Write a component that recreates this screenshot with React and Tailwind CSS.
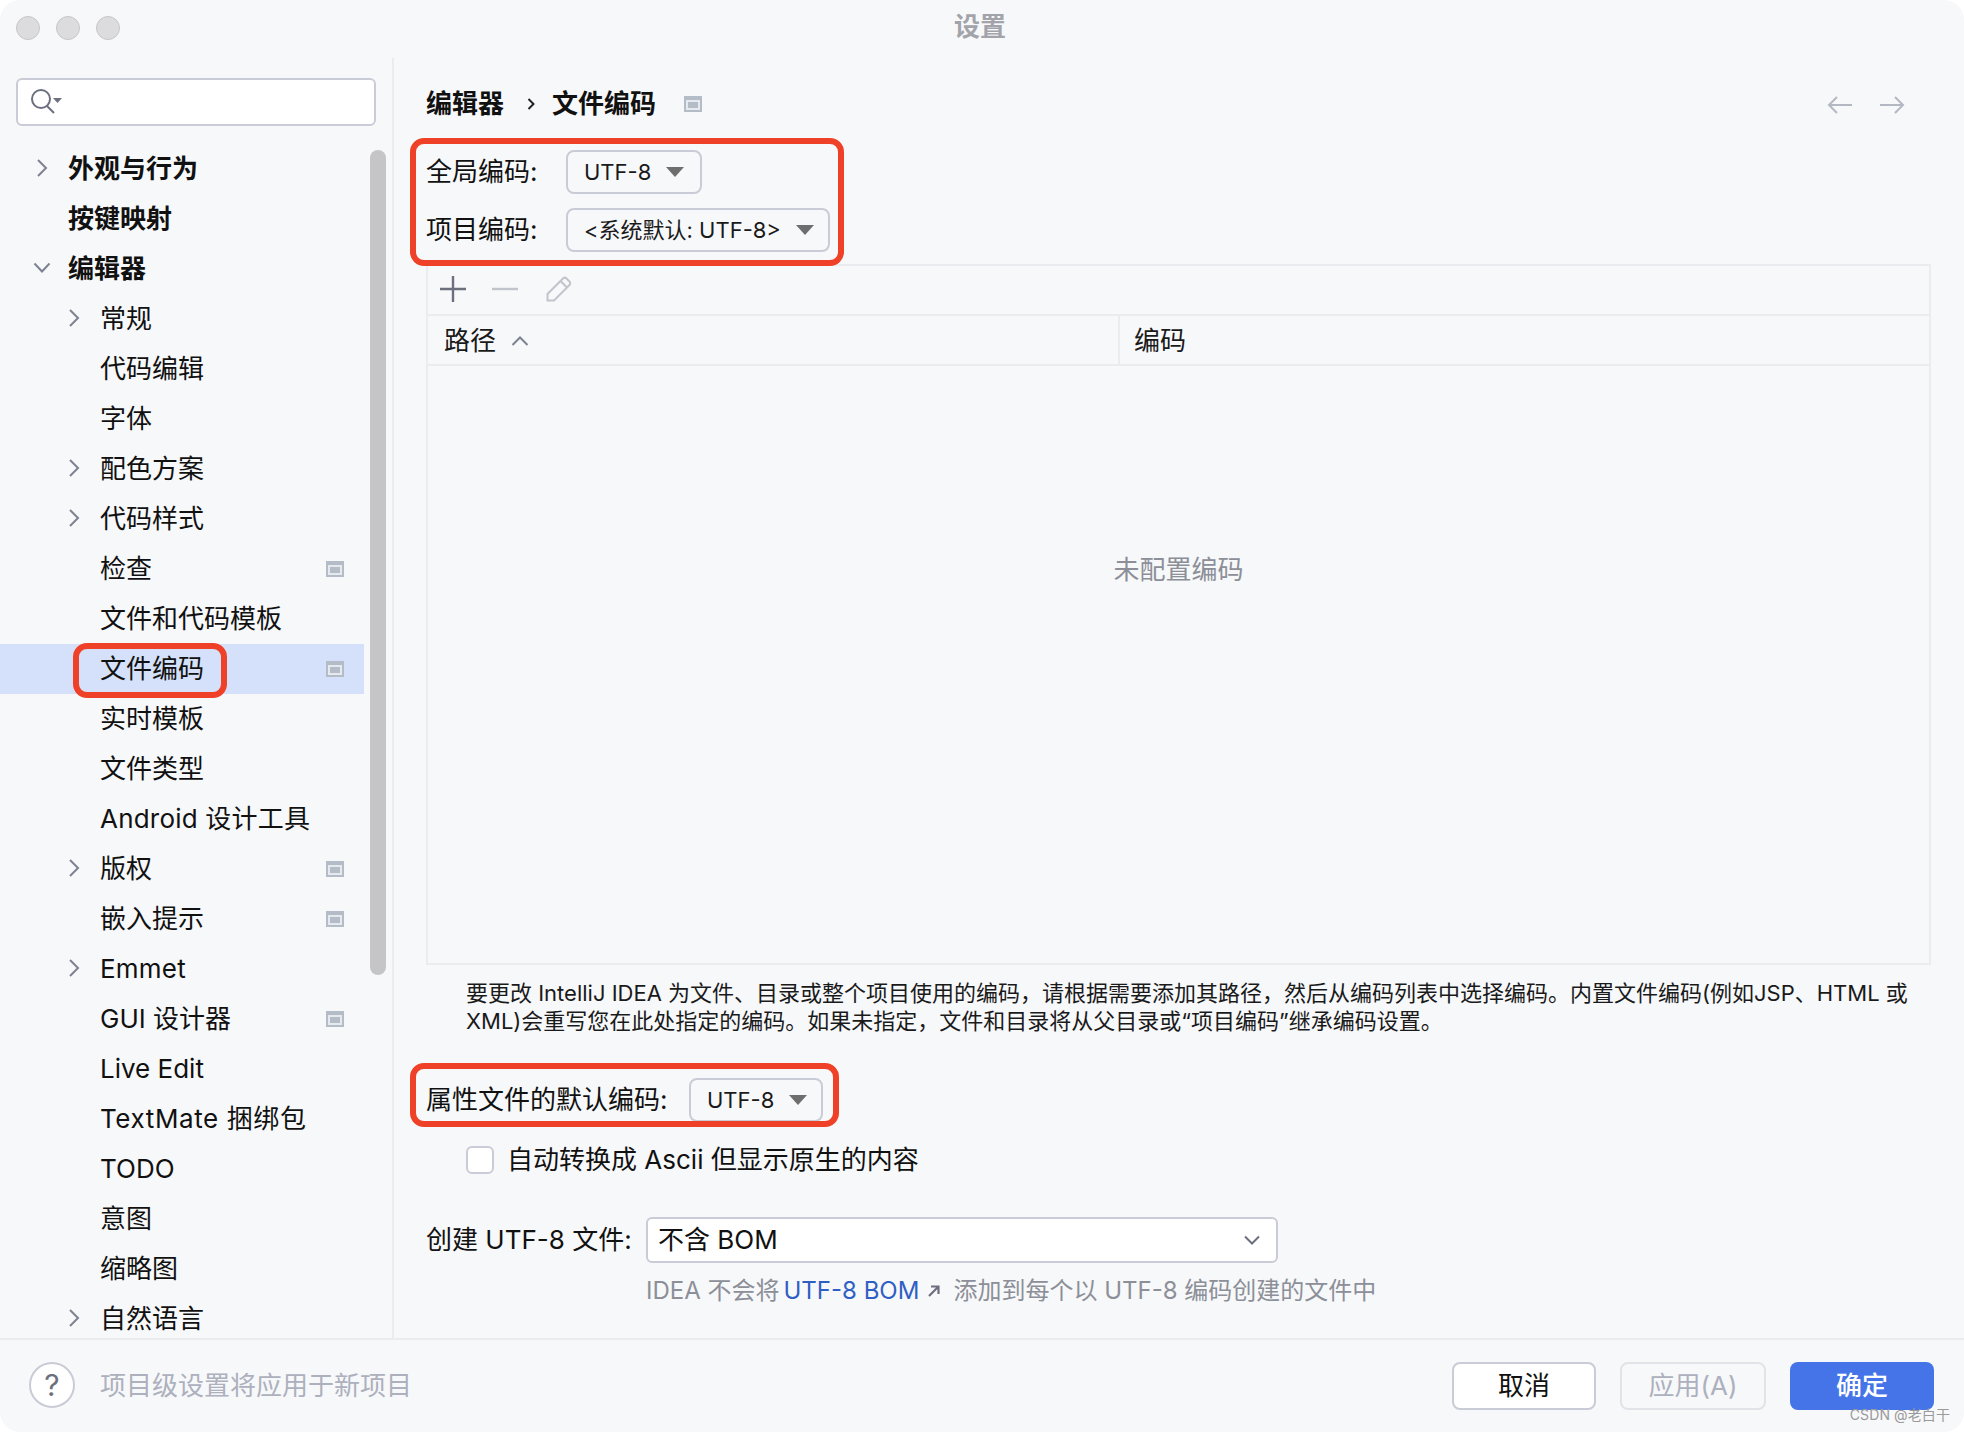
const rows = [
  { label: '外观与行为', level: 0, arrow: 'right' },
  { label: '按键映射', level: 0 },
  { label: '编辑器', level: 0, arrow: 'down' },
  { label: '常规', level: 1, arrow: 'right' },
  { label: '代码编辑', level: 1 },
  { label: '字体', level: 1 },
  { label: '配色方案', level: 1, arrow: 'right' },
  { label: '代码样式', level: 1, arrow: 'right' },
  { label: '检查', level: 1, project: true },
  { label: '文件和代码模板', level: 1 },
  { label: '文件编码', level: 1, project: true, active: true },
  { label: '实时模板', level: 1 },
  { label: '文件类型', level: 1 },
  { label: 'Android 设计工具', level: 1, tracking: 'tracking-[0.2px]' },
  { label: '版权', level: 1, arrow: 'right', project: true },
  { label: '嵌入提示', level: 1, project: true },
  { label: 'Emmet', level: 1, arrow: 'right', tracking: 'tracking-[0.2px]' },
  { label: 'GUI 设计器', level: 1, project: true },
  { label: 'Live Edit', level: 1 },
  { label: 'TextMate 捆绑包', level: 1, tracking: 'tracking-[0.6px]' },
  { label: 'TODO', level: 1 },
  { label: '意图', level: 1 },
  { label: '缩略图', level: 1 },
  { label: '自然语言', level: 1, arrow: 'right' },
]

function ProjectIcon() {
  return (
    <svg width="18" height="16" viewBox="0 0 18 16" className="shrink-0">
      <rect width="18" height="16" fill="#b4bcc7" />
      <rect x="2" y="4" width="14" height="10" fill="#e6e9ee" />
      <rect x="4" y="6" width="10" height="6" fill="#b4bcc7" />
    </svg>
  )
}

function Triangle() {
  return (
    <svg width="18" height="10" viewBox="0 0 18 10" className="shrink-0">
      <path d="M0 0H18L9 10Z" fill="#6e6e6e" />
    </svg>
  )
}

function Combo({ width, children }) {
  return (
    <div className={`flex h-[44px] ${width} items-center gap-[15px] rounded-lg border-2 border-[#c9ccd6] bg-[#f7f8fa] pl-[16px] text-[22px] text-[#1a1a1a]`}>
      <span className="whitespace-nowrap">{children}</span>
      <Triangle />
    </div>
  )
}

function TreeRow({ row }) {
  return (
    <div className={`relative flex h-[50px] items-center pr-[20px] ${row.active ? 'bg-[#d5e1fa]' : ''}`}>
      {row.arrow === 'right' && row.level === 0 && (
        <svg width="12" height="20" viewBox="0 0 12 20" className="absolute left-[36px] top-[14px]">
          <path d="M2 2L10 10L2 18" fill="none" stroke="#7e8290" strokeWidth="2" />
        </svg>
      )}
      {row.arrow === 'right' && row.level === 1 && (
        <svg width="12" height="20" viewBox="0 0 12 20" className="absolute left-[68px] top-[14px]">
          <path d="M2 2L10 10L2 18" fill="none" stroke="#7e8290" strokeWidth="2" />
        </svg>
      )}
      {row.arrow === 'down' && (
        <svg width="18" height="12" viewBox="0 0 18 12" className="absolute left-[33px] top-[18px]">
          <path d="M1.5 1.5L9 9.5L16.5 1.5" fill="none" stroke="#7e8290" strokeWidth="2" />
        </svg>
      )}
      <span className={`whitespace-nowrap text-[26px] text-[#111111] ${row.tracking || ''} ${row.level === 0 ? 'ml-[68px] font-bold' : 'ml-[100px]'}`}>
        {row.label}
      </span>
      {row.project && <div className="ml-auto"><ProjectIcon /></div>}
      {row.active && <div className="absolute left-[73px] top-[-1px] h-[55px] w-[154px] rounded-[14px] border-[6px] border-[#ef4128]" />}
    </div>
  )
}

export default function App() {
  return (
    <div className="relative flex h-[1432px] w-[1964px] flex-col overflow-hidden rounded-[20px] bg-[#f7f8fa] font-['Inter','Noto_Sans_CJK_SC',sans-serif] text-[26px] leading-none">
      {/* title bar */}
      <div className="relative flex h-[58px] shrink-0 items-center justify-center">
        <div className="absolute left-[16px] top-[16px] flex gap-[16px]">
          <div className="h-[24px] w-[24px] rounded-full border border-[#c6c6c8] bg-[#dcdcde]" />
          <div className="h-[24px] w-[24px] rounded-full border border-[#c6c6c8] bg-[#dcdcde]" />
          <div className="h-[24px] w-[24px] rounded-full border border-[#c6c6c8] bg-[#dcdcde]" />
        </div>
        <span className="mr-[4px] mt-[-4px] text-[26px] font-bold text-[#a2a4aa]">设置</span>
      </div>

      <div className="flex min-h-0 flex-1">
        {/* sidebar */}
        <aside className="flex w-[394px] shrink-0 flex-col border-r-2 border-[#ebecf0]">
          <div className="ml-[16px] mt-[20px] flex h-[48px] w-[360px] shrink-0 items-center rounded-md border-2 border-[#c9ccd6] bg-white pl-[11px]">
            <svg width="36" height="28" viewBox="0 0 36 28">
              <circle cx="12" cy="11" r="9" fill="none" stroke="#6c707e" strokeWidth="2" />
              <path d="M18 18L25 25" stroke="#6c707e" strokeWidth="2" />
              <path d="M24 10H33L28.5 15Z" fill="#6c707e" />
            </svg>
          </div>
          <div className="mt-[18px] flex min-h-0 flex-1">
            <div className="w-[364px] shrink-0 overflow-hidden">
              {rows.map((row) => (
                <TreeRow key={row.label} row={row} />
              ))}
            </div>
            <div className="ml-[6px] mt-[6px] h-[825px] w-[16px] rounded-lg bg-[#c5c5c7]" />
          </div>
        </aside>

        {/* main */}
        <main className="flex min-w-0 flex-1 flex-col pl-[32px] pr-[33px]">
          <div className="flex h-[92px] shrink-0 items-center">
            <span className="font-bold text-[#111111]">编辑器</span>
            <svg width="8" height="14" viewBox="0 0 8 14" className="ml-[23px] mr-[17px]">
              <path d="M1.5 2L6.5 7L1.5 12" fill="none" stroke="#222222" strokeWidth="2" />
            </svg>
            <span className="font-bold text-[#111111]">文件编码</span>
            <div className="ml-[28px]"><ProjectIcon /></div>
            <div className="ml-auto mr-[26px] mt-[2px] flex gap-[26px]">
              <svg width="26" height="20" viewBox="0 0 26 20">
                <path d="M25 10H2M10 2L2 10L10 18" fill="none" stroke="#b4b8c2" strokeWidth="2" />
              </svg>
              <svg width="26" height="20" viewBox="0 0 26 20">
                <path d="M1 10H24M16 2L24 10L16 18" fill="none" stroke="#b4b8c2" strokeWidth="2" />
              </svg>
            </div>
          </div>

          {/* global / project encoding */}
          <div className="relative flex shrink-0 flex-col gap-[14px]">
            <div className="flex items-center">
              <span className="w-[140px] text-[#111111]">全局编码:</span>
              <Combo width="w-[136px]">UTF-8</Combo>
            </div>
            <div className="flex items-center">
              <span className="w-[140px] text-[#111111]">项目编码:</span>
              <Combo width="w-[264px]">&lt;系统默认: UTF-8&gt;</Combo>
            </div>
            <div className="absolute left-[-16px] top-[-12px] h-[128px] w-[434px] rounded-[14px] border-[6px] border-[#ef4128]" />
          </div>

          {/* encoding table */}
          <div className="mt-[12px] flex h-[701px] shrink-0 flex-col border-2 border-[#ebecf0]">
            <div className="flex h-[50px] shrink-0 items-center border-b-2 border-[#ebecf0] pb-[2px] pl-[12px]">
              <svg width="26" height="26" viewBox="0 0 26 26">
                <path d="M13 0V26M0 13H26" stroke="#6c707e" strokeWidth="2.4" />
              </svg>
              <svg width="26" height="26" viewBox="0 0 26 26" className="ml-[26px]">
                <path d="M0 13H26" stroke="#c2c4cc" strokeWidth="2.4" />
              </svg>
              <svg width="26" height="26" viewBox="0 0 26 26" className="ml-[28px]">
                <path d="M1.5 24.5V18L17 2.5C18 1.5 19.5 1.5 20.5 2.5L23.5 5.5C24.5 6.5 24.5 8 23.5 9L8 24.5ZM14.5 5L21 11.5" fill="none" stroke="#c2c4cc" strokeWidth="2" />
              </svg>
            </div>
            <div className="flex h-[50px] shrink-0 items-center border-b-2 border-[#ebecf0] text-[#1a1a1a]">
              <div className="flex h-full w-[692px] items-center border-r-2 border-[#ebecf0] pl-[16px] pt-[2px]">
                <span>路径</span>
                <svg width="18" height="10" viewBox="0 0 18 10" className="ml-[15px]">
                  <path d="M1.5 9L9 1.5L16.5 9" fill="none" stroke="#7e8290" strokeWidth="2" />
                </svg>
              </div>
              <span className="pl-[14px] pt-[2px]">编码</span>
            </div>
            <div className="flex flex-1 items-center justify-center pb-[190px] text-[#8c8f98]">未配置编码</div>
          </div>

          {/* description */}
          <p className="mt-[14px] whitespace-nowrap pl-[40px] text-[22px] leading-[28px] text-[#1a1a1a]">
            要更改 IntelliJ IDEA 为文件、目录或整个项目使用的编码，请根据需要添加其路径，然后从编码列表中选择编码。内置文件编码(例如JSP、HTML 或
            <br />
            XML)会重写您在此处指定的编码。如果未指定，文件和目录将从父目录或“项目编码”继承编码设置。
          </p>

          {/* properties encoding */}
          <div className="relative mt-[43px] flex shrink-0 items-center">
            <span className="w-[263px] text-[#111111]">属性文件的默认编码:</span>
            <Combo width="w-[134px]">UTF-8</Combo>
            <div className="absolute left-[-16px] top-[-15px] h-[64px] w-[429px] rounded-[14px] border-[6px] border-[#ef4128]" />
          </div>

          <div className="ml-[40px] mt-[24px] flex h-[28px] shrink-0 items-center gap-[13px]">
            <div className="h-[28px] w-[28px] rounded-md border-2 border-[#c9ccd6] bg-white" />
            <span className="text-[#111111]">自动转换成 Ascii 但显示原生的内容</span>
          </div>

          <div className="mt-[43px] flex h-[46px] shrink-0 items-center">
            <span className="w-[220px] whitespace-nowrap text-[#111111]">创建 UTF-8 文件:</span>
            <div className="flex h-[46px] w-[632px] items-center justify-between rounded-md border-2 border-[#c9ccd6] bg-white pl-[10px] pr-[15px]">
              <span className="text-[#111111]">不含 BOM</span>
              <svg width="18" height="12" viewBox="0 0 18 12">
                <path d="M2 2.5L9 9.5L16 2.5" fill="none" stroke="#6c707e" strokeWidth="2" />
              </svg>
            </div>
          </div>

          <div className="ml-[220px] mt-[16px] flex shrink-0 items-center whitespace-nowrap text-[24px] text-[#8c8f98]">
            <span>IDEA 不会将</span>
            <span className="ml-[4px] text-[#2f5fc4]">UTF-8 BOM</span>
            <svg width="14" height="14" viewBox="0 0 14 14" className="ml-[8px] mr-[12px]">
              <path d="M2 12L11 3M4 2.5H11.5V10" fill="none" stroke="#6c707e" strokeWidth="2.2" />
            </svg>
            <span>添加到每个以 UTF-8 编码创建的文件中</span>
          </div>
        </main>
      </div>

      {/* footer */}
      <footer className="flex h-[94px] shrink-0 items-start border-t-2 border-[#ebecf0] pl-[29px] pr-[30px] pt-[22px]">
        <div className="flex h-[46px] w-[46px] items-center justify-center rounded-full border-2 border-[#c9ccd6] bg-white text-[30px] text-[#6c707e]">?</div>
        <span className="ml-[25px] mt-[11px] text-[#adb0bd]">项目级设置将应用于新项目</span>
        <div className="ml-auto flex gap-[24px]">
          <div className="flex h-[48px] w-[144px] items-center justify-center rounded-lg border-2 border-[#c9ccd6] bg-white text-[#111111]">取消</div>
          <div className="flex h-[48px] w-[146px] items-center justify-center rounded-lg border-2 border-[#e1e3e8] text-[#adb0bd]">应用(A)</div>
          <div className="flex h-[48px] w-[144px] items-center justify-center rounded-lg bg-[#4574e8] font-medium text-white">确定</div>
        </div>
      </footer>

      <span className="absolute bottom-[10px] right-[14px] text-[14px] tracking-[0.1px] text-[#9a9a9a]">CSDN @老白干</span>
    </div>
  )
}
